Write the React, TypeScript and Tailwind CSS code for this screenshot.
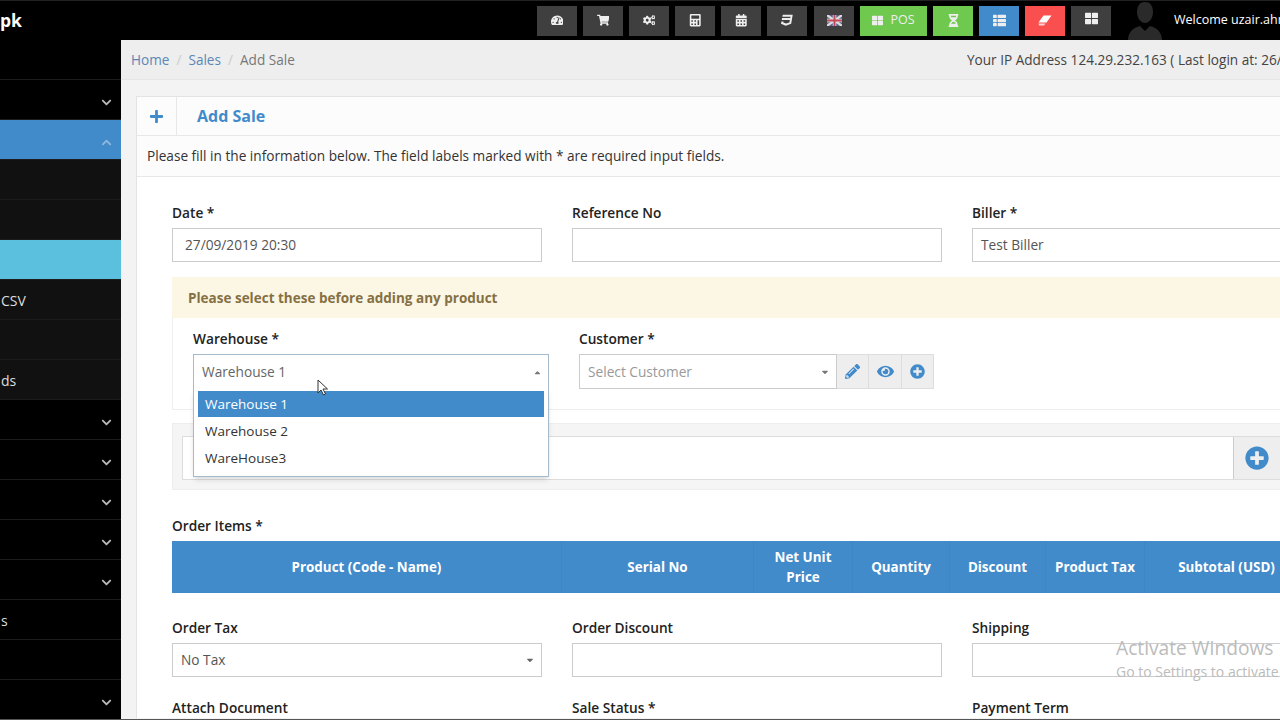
import { FaTachometerAlt, FaShoppingCart, FaCogs, FaCalculator, FaCalendarAlt, FaCss3, FaThLarge, FaHourglassHalf, FaThList, FaPencilAlt, FaEye, FaPlusCircle, FaPlus, FaChevronDown, FaChevronUp, FaCaretDown, FaCaretUp } from "react-icons/fa";
import type { ReactNode } from "react";

const font = "font-['Open_Sans','Liberation_Sans',sans-serif]";
const labelCls = "text-[13.7px] font-semibold leading-[20px] text-[#222] mb-[5px]";

function TopBtn({ color = "bg-[#3f3f3f]", wide = false, extra = "", children }: { color?: string; wide?: boolean; extra?: string; children: ReactNode }) {
  return (
    <div className={`${color} ${wide ? "w-[67px]" : "w-10"} ${extra} h-[30px] flex items-center justify-center gap-[7px] text-[#eee] text-[12.5px] shrink-0`}>
      {children}
    </div>
  );
}

function Flag() {
  return (
    <svg width="15" height="11" viewBox="0 0 60 44">
      <rect width="60" height="44" fill="#5b5f8f" />
      <path d="M0 0L60 44M60 0L0 44" stroke="#ddd" strokeWidth="9" />
      <path d="M30 0V44M0 22H60" stroke="#ddd" strokeWidth="14" />
      <path d="M30 0V44M0 22H60" stroke="#c2485a" strokeWidth="8" />
    </svg>
  );
}

function Eraser() {
  return (
    <svg width="14" height="11" viewBox="0 0 14 11">
      <path d="M5.5 0.5H13.5L8.5 7.5H0.5Z" fill="#fff" />
      <path d="M0.5 8.5H7.5L6 10.5H1Z" fill="#fff" opacity="0.75" />
    </svg>
  );
}

function Avatar() {
  return (
    <svg width="36" height="40" viewBox="0 0 36 40" className="shrink-0">
      <path d="M18 1c6 0 8 5 8 10 0 5-3 11-8 11S10 16 10 11c0-5 2-10 8-10z" fill="#2a2a2a" />
      <path d="M1 40c0-9 5-13 12-15l5 5 5-5c7 2 12 6 12 15z" fill="#2a2a2a" />
    </svg>
  );
}

function SideRow({ tone = "bg-black", text, arrow }: { tone?: string; text?: string; arrow?: "down" | "up" }) {
  return (
    <div className={`${tone} h-10 shrink-0 flex items-center justify-between pr-[9px] border-b border-[#1c1c1c] text-[14px] text-[#ddd]`}>
      <span className="pl-px pt-0.5">{text}</span>
      {arrow === "down" && <FaChevronDown className="text-[#bbb] text-[11px] mt-1.5" />}
      {arrow === "up" && <FaChevronUp className="text-[#8fb8dd] text-[11px] mt-1.5" />}
    </div>
  );
}

function Sidebar() {
  return (
    <div className="w-[121px] shrink-0 bg-black flex flex-col">
      <SideRow />
      <SideRow arrow="down" />
      <SideRow tone="bg-[#428bca]" arrow="up" />
      <SideRow tone="bg-[#111]" />
      <SideRow tone="bg-[#111]" />
      <SideRow tone="bg-[#5bc0de]" />
      <SideRow tone="bg-[#111]" text="CSV" />
      <SideRow tone="bg-[#111]" />
      <SideRow tone="bg-[#111]" text="ds" />
      <SideRow arrow="down" />
      <SideRow arrow="down" />
      <SideRow arrow="down" />
      <SideRow arrow="down" />
      <SideRow arrow="down" />
      <SideRow text="s" />
      <SideRow />
      <SideRow arrow="down" />
    </div>
  );
}

function Field({ label, value, select }: { label: string; value?: string; select?: boolean }) {
  return (
    <div>
      <div className={labelCls}>{label}</div>
      <div className={`h-[34px] border border-[#ccc] bg-white flex items-center justify-between text-[13.7px] text-[#555] pr-[6px] ${select ? "pl-2" : "pl-3"}`}>
        <span>{value}</span>
        {select && <FaCaretDown className="text-[#666] text-[10px]" />}
      </div>
    </div>
  );
}

const cols = [
  { w: "w-[390px]", t: "Product (Code - Name)" },
  { w: "w-[192px]", t: "Serial No" },
  { w: "w-[99px]", t: "Net Unit Price" },
  { w: "w-[97px]", t: "Quantity" },
  { w: "w-[96px]", t: "Discount" },
  { w: "w-[99px]", t: "Product Tax" },
  { w: "w-[164px]", t: "Subtotal (USD)" },
];

export default function App() {
  return (
    <div className={`${font} w-[1280px] h-[720px] overflow-hidden flex flex-col bg-white border-t border-b border-t-[#222] border-b-[#555]`}>
      <header className="h-[39px] bg-black shrink-0 flex items-center overflow-hidden">
        <div className="w-[537px] shrink-0 text-white font-bold text-[17.5px]">pk</div>
        <div className="flex items-center gap-1.5 shrink-0">
          <TopBtn><FaTachometerAlt /></TopBtn>
          <TopBtn><FaShoppingCart /></TopBtn>
          <TopBtn><FaCogs /></TopBtn>
          <TopBtn><FaCalculator /></TopBtn>
          <TopBtn><FaCalendarAlt /></TopBtn>
          <TopBtn><FaCss3 /></TopBtn>
          <TopBtn extra="ml-px"><Flag /></TopBtn>
          <TopBtn color="bg-[#6fc94e]" wide><FaThLarge className="text-[11px]" />POS</TopBtn>
          <TopBtn color="bg-[#6fc94e]"><FaHourglassHalf className="text-[13px]" /></TopBtn>
          <TopBtn color="bg-[#428bca]"><FaThList className="text-[13px]" /></TopBtn>
          <TopBtn color="bg-[#f9504f]"><Eraser /></TopBtn>
          <TopBtn><FaThLarge className="text-[13px] -mt-1" /></TopBtn>
        </div>
        <div className="ml-4 flex items-center gap-[11px] shrink-0 text-white text-[12.5px] whitespace-nowrap">
          <Avatar />
          <span>Welcome uzair.ahmed</span>
        </div>
      </header>

      <div className="flex flex-1 min-h-0">
        <Sidebar />
        <main className="flex-1 min-w-0 bg-[#f3f3f3] overflow-hidden">
          <div className="h-10 bg-[#eeeeee] border-b border-[#e6e6e6] flex items-center justify-between pl-[10px] pt-0.5 whitespace-nowrap">
            <div className="flex gap-[7px] text-[13.6px]">
              <span className="text-[#5b87b5]">Home</span>
              <span className="text-[#ccc]">/</span>
              <span className="text-[#5b87b5]">Sales</span>
              <span className="text-[#ccc]">/</span>
              <span className="text-[#777]">Add Sale</span>
            </div>
            <div className="text-[#444] text-[13.6px] w-[313px] shrink-0 overflow-hidden">Your IP Address 124.29.232.163 ( Last login at: 26/09/2019 )</div>
          </div>

          <div className="ml-[15px] mt-[16px] bg-white border-l border-t border-[#e3e3e3] relative">
            <div className="h-[39px] flex items-center border-b border-[#e8e8e8] bg-[#fcfcfc]">
              <div className="w-10 h-full flex items-center justify-center border-r border-[#e8e8e8]">
                <FaPlus className="text-[#428bca] text-[15px]" />
              </div>
              <h2 className="ml-5 text-[16px] font-bold text-[#428bca]">Add Sale</h2>
            </div>
            <div className="h-[41px] flex items-center pl-[10px] text-[13.65px] text-[#333] border-b border-[#e8e8e8] bg-[#fcfcfc] whitespace-nowrap">
              Please fill in the information below. The field labels marked with * are required input fields.
            </div>

            <div className="pl-[35px] pt-[26px] w-[1200px]">
              <div className="grid grid-cols-[370px_370px_370px] gap-x-[30px]">
                <Field label="Date *" value="27/09/2019 20:30" />
                <Field label="Reference No" />
                <div>
                  <div className={labelCls}>Biller *</div>
                  <div className="h-[34px] border border-[#ccc] flex items-center text-[13.7px] text-[#555] pl-2">Test Biller</div>
                </div>
              </div>

              <div className="mt-[15px] h-[41px] bg-[#fcf6e4] flex items-center pl-4 pt-0.5 text-[13.5px] font-bold text-[#857043]">
                Please select these before adding any product
              </div>

              <div className="h-[92px] border-l border-b border-[#eeeeee] pl-5 pt-[11px] flex gap-[30px]">
                <div className="w-[356px]">
                  <div className={labelCls}>Warehouse *</div>
                  <div className="relative">
                    <div className="h-[35px] border border-[#a5bacb] flex items-center justify-between pl-2 pr-[6px] pt-px text-[13.7px] text-[#666]">
                      <span>Warehouse 1</span>
                      <FaCaretUp className="text-[#777] text-[9px]" />
                    </div>
                    <div className="absolute z-10 left-0 right-0 top-[34px] h-[89px] bg-white border border-t-0 border-[#a5bacb] shadow-md px-1 pt-[3px] text-[13.5px] text-[#333]">
                      <div className="h-[26px] bg-[#428bca] text-white flex items-center pl-[7px] font-medium">Warehouse 1</div>
                      <div className="h-[28px] pt-px flex items-center pl-[7px]">Warehouse 2</div>
                      <div className="h-[27px] flex items-center pl-[7px]">WareHouse3</div>
                    </div>
                    <svg width="12" height="17" viewBox="0 0 12 17" className="absolute z-20 left-[124px] top-[25px]">
                      <path d="M1 1V14L4 11L6.5 16L8.5 15L6 10H10.5Z" fill="#fff" stroke="#333" strokeWidth="1" />
                    </svg>
                  </div>
                </div>
                <div>
                  <div className={labelCls}>Customer *</div>
                  <div className="flex h-[35px]">
                    <div className="w-[258px] border border-[#ccc] flex items-center justify-between pl-2 pr-[6px] pt-px text-[13.7px] text-[#999]">
                      <span>Select Customer</span>
                      <FaCaretDown className="text-[#777] text-[10px]" />
                    </div>
                    {[<FaPencilAlt key="a" />, <FaEye key="b" className="text-[17px]" />, <FaPlusCircle key="c" />].map((icon) => (
                      <div key={icon.key} className="w-[32.4px] bg-[#eeeeee] border border-l-0 border-[#ddd] flex items-center justify-center text-[#428bca] text-[15px]">
                        {icon}
                      </div>
                    ))}
                  </div>
                </div>
              </div>

              <div className="mt-[13px] h-[67px] bg-[#f5f5f5] border border-[#eeeeee] pl-[9px] pt-[12px]">
                <div className="h-[44px] flex bg-white border border-[#ddd]">
                  <div className="flex-1" />
                  <div className="w-[47px] mr-[55px] bg-[#eeeeee] border-l border-[#ccc] flex items-center justify-center">
                    <FaPlusCircle className="text-[#428bca] text-[24px]" />
                  </div>
                </div>
              </div>

              <div className="mt-[26px] text-[13.7px] font-semibold leading-[20px] text-[#222] mb-[5px]">Order Items *</div>
              <div className="flex h-[52px] w-[1137px] bg-[#428bca] text-white text-[13.4px] font-bold text-center leading-[20px]">
                {cols.map((c) => (
                  <div key={c.t} className={`${c.w} shrink-0 flex items-center justify-center px-0 pb-px border-r border-[#3f86c3]`}>
                    <span className={c.t === "Net Unit Price" ? "w-[60px]" : "whitespace-nowrap"}>{c.t}</span>
                  </div>
                ))}
              </div>

              <div className="mt-[25px] grid grid-cols-[370px_370px_370px] gap-x-[30px]">
                <Field label="Order Tax" value="No Tax" select />
                <Field label="Order Discount" />
                <Field label="Shipping" />
              </div>
              <div className="mt-[21px] grid grid-cols-[370px_370px_370px] gap-x-[30px] text-[13.7px] font-semibold leading-[20px] text-[#222]">
                <div>Attach Document</div>
                <div>Sale Status *</div>
                <div>Payment Term</div>
              </div>
            </div>

            <div className="absolute left-[979px] top-[539px] w-[165px] overflow-hidden whitespace-nowrap text-[#bbb]">
              <div className="text-[19.2px] leading-[24px]">Activate Windows</div>
              <div className="text-[14px] leading-[24px]">Go to Settings to activate Windows.</div>
            </div>
          </div>
        </main>
      </div>
    </div>
  );
}
